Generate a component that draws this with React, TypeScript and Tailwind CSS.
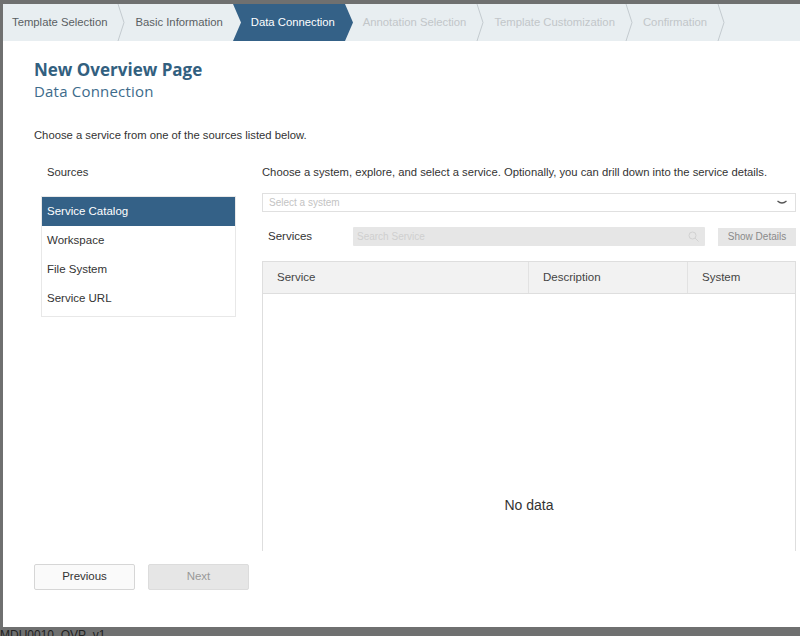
import React from 'react';

const steps = [
  { label: 'Template Selection', state: 'done' },
  { label: 'Basic Information', state: 'done' },
  { label: 'Data Connection', state: 'active' },
  { label: 'Annotation Selection', state: 'todo' },
  { label: 'Template Customization', state: 'todo' },
  { label: 'Confirmation', state: 'todo' },
];

const sources = ['Service Catalog', 'Workspace', 'File System', 'Service URL'];

const Chevron = () => (
  <svg width="8" height="37" viewBox="0 0 8 37" className="shrink-0">
    <polyline points="1,0 7,18.5 1,37" fill="none" stroke="#c3cacf" strokeWidth="1" />
  </svg>
);

const App = () => {
  return (
    <div className="w-[800px] h-[636px] bg-[#6f7070] overflow-hidden pt-[4px] pl-[3px]" style={{ fontFamily: '"Liberation Sans", Arial, sans-serif' }}>
      <div className="w-[797px] h-[623px] bg-white flex flex-col">
        {/* wizard steps */}
        <div className="h-[37px] bg-[#e8eef1] flex items-center text-[11.3px] pl-[9px] shrink-0">
          {steps.map((s, i) => {
            if (s.state === 'active') {
              return (
                <div key={s.label} className="relative h-[37px] w-[121px] mr-[9px] flex items-center shrink-0">
                  <svg className="absolute inset-0" width="121" height="37" viewBox="0 0 121 37">
                    <polygon points="0,0 112,0 120,18.5 112,37 0,37 8,18.5" fill="#346187" />
                  </svg>
                  <span className="relative pl-[18px] text-white">{s.label}</span>
                </div>
              );
            }
            const next = steps[i + 1];
            return (
              <div key={s.label} className="flex items-center shrink-0">
                <span className={s.state === 'done' ? 'text-[#5a5f63]' : 'text-[#c2c6c9]'}>{s.label}</span>
                {next && next.state === 'active' ? (
                  <div className="w-[10px]" />
                ) : (
                  <>
                    <div className="w-[10px]" />
                    <Chevron />
                    <div className="w-[10px]" />
                  </>
                )}
              </div>
            );
          })}
        </div>

        <div className="flex-1 flex flex-col px-[31px]">
          <div className="pt-[17px]" style={{ fontFamily: '"Open Sans", sans-serif' }}>
            <h1 className="text-[17px] font-bold text-[#32607f] leading-[23px]">New Overview Page</h1>
            <h2 className="text-[15px] text-[#3d6b8b] leading-[21px] tracking-[0.2px]">Data Connection</h2>
          </div>
          <p className="mt-[25px] text-[11.25px] text-[#333] leading-[16px]">Choose a service from one of the sources listed below.</p>

          <div className="flex mt-[21px] flex-1 min-h-0 text-[11.25px]">
            {/* sources */}
            <div className="w-[195px] ml-[7px] shrink-0">
              <div className="text-[#333] pl-[6px] leading-[16px] h-[16px]">Sources</div>
              <div className="mt-[16px] border border-[#e8e8e8]">
                {sources.map((src, i) => (
                  <div
                    key={src}
                    className={
                      'h-[29px] flex items-center pl-[5px] text-[11.5px] ' +
                      (i === 0 ? 'bg-[#346187] text-white' : 'text-[#333]')
                    }
                  >
                    {src}
                  </div>
                ))}
                <div className="h-[3px]" />
              </div>
            </div>

            {/* services */}
            <div className="flex-1 ml-[26px] flex flex-col">
              <div className="text-[#333] leading-[16px] h-[16px] whitespace-nowrap">
                Choose a system, explore, and select a service. Optionally, you can drill down into the service details.
              </div>
              <div className="mt-[13px] h-[19px] border border-[#e0e0e0] flex items-center justify-between pl-[6px] pr-[8px]">
                <span className="text-[10px] text-[#c3c3c3]">Select a system</span>
                <svg width="10" height="6" viewBox="0 0 10 6">
                  <path d="M0.5 1 Q5 5 9.5 1" fill="none" stroke="#555" strokeWidth="1.2" />
                </svg>
              </div>
              <div className="mt-[15px] flex items-center h-[19px]">
                <span className="w-[91px] pl-[6px] text-[11.5px] text-[#333]">Services</span>
                <div className="w-[352px] h-[19px] bg-[#e6e6e6] flex items-center justify-between pl-[4px] pr-[6px] rounded-[1px]">
                  <span className="text-[10px] text-[#cfcfcf]">Search Service</span>
                  <svg width="11" height="11" viewBox="0 0 11 11">
                    <circle cx="4.5" cy="4.5" r="3.5" fill="none" stroke="#d2d2d2" strokeWidth="1" />
                    <line x1="7" y1="7" x2="10.5" y2="10.5" stroke="#d2d2d2" strokeWidth="1" />
                  </svg>
                </div>
                <div className="ml-[13px] w-[78px] h-[18px] bg-[#e6e6e6] flex items-center justify-center text-[10px] text-[#8a8a8a]">
                  Show Details
                </div>
              </div>

              <div className="mt-[15px] flex-1 border-x border-t border-[#dedede] flex flex-col">
                <div className="h-[32px] bg-[#f2f2f2] border-b border-[#dedede] flex text-[11.5px] text-[#444] shrink-0">
                  <div className="w-[266px] border-r border-[#e2e2e2] flex items-center pl-[14px]">Service</div>
                  <div className="w-[159px] border-r border-[#e2e2e2] flex items-center pl-[14px]">Description</div>
                  <div className="flex-1 flex items-center pl-[14px]">System</div>
                </div>
                <div className="flex-1 flex items-end justify-center pb-[35px] text-[14px] text-[#333]">
                  No data
                </div>
              </div>
            </div>
          </div>

          <div className="flex gap-[13px] pt-[13px] pb-[37px]">
            <button className="w-[101px] h-[26px] border border-[#d6d6d6] bg-[#fafafa] text-[11.5px] text-[#333] rounded-[2px]">Previous</button>
            <button className="w-[101px] h-[26px] border border-[#dcdcdc] bg-[#e6e6e6] text-[11.5px] text-[#999] rounded-[2px]">Next</button>
          </div>
        </div>
      </div>
      <div className="text-[12px] text-[#222] leading-[14px] ml-[-3px] mt-[1px]">MDU0010_OVP_v1</div>
    </div>
  );
};

export default App;
